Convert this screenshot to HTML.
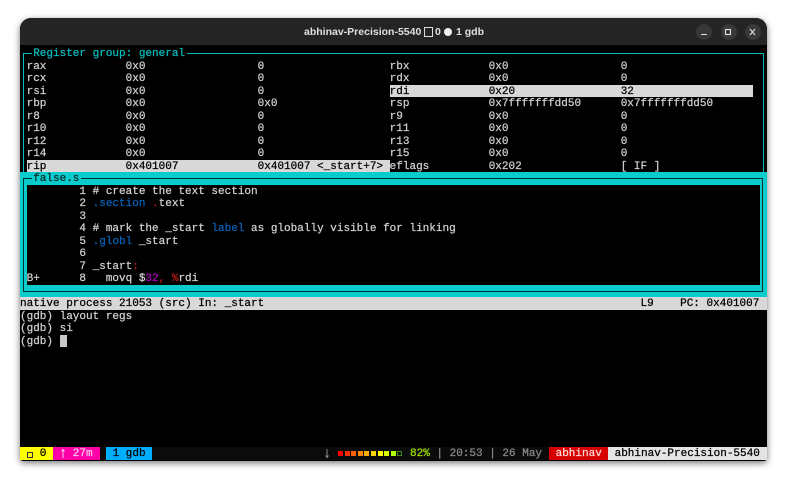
<!DOCTYPE html>
<html><head><meta charset="utf-8"><style>
html,body{margin:0;padding:0;background:#fff;width:786px;height:483px;overflow:hidden}
#w{position:absolute;left:20px;top:18px;width:747px;height:443px;background:#000;border-radius:11px 11px 3px 3px;box-shadow:0 2px 7px rgba(0,0,0,.55);overflow:hidden}
#t{position:absolute;left:284px;top:0;height:27px;color:#e0e0e0;font:bold 10.5px/28px "Liberation Sans",sans-serif;white-space:pre}
#tb{position:absolute;left:0;top:0;width:747px;height:27px;background:#242424}
.b{position:absolute;top:6px;width:16px;height:16px;border-radius:50%;background:#383838}
#s{position:absolute;left:20px;top:48.2px;font:11px/12.5px "Liberation Mono",monospace;color:#d0d0d0;width:747px;-webkit-text-stroke:.25px currentColor}
.r{height:12.5px;white-space:pre;position:relative}
.bl{color:#0a62b8}.rd{color:#c01818}.mg{color:#b000c0}
.abs{position:absolute}
.st{position:absolute;top:447px;height:12.5px;font:11px/14px "Liberation Mono",monospace;white-space:pre;-webkit-text-stroke:.25px currentColor}
.sq{position:absolute;top:450.5px;width:5px;height:5px}
.ho{width:3px;height:3px;border:1px solid #3c8a18}
</style></head><body>
<div id="w">
<div id="tb"></div>
<div id="t">abhinav-Precision-5540</div>
<div class="abs" style="left:404px;top:9px;width:7px;height:8px;border:1px solid #ddd"></div>
<div class="abs" style="left:415px;top:0;font:bold 10.5px/28px 'Liberation Sans',sans-serif;color:#e0e0e0">0</div>
<div class="abs" style="left:424px;top:10px;width:8px;height:8px;border-radius:50%;background:#eee"></div>
<div class="abs" style="left:436px;top:0;font:bold 10.5px/28px 'Liberation Sans',sans-serif;color:#e0e0e0;white-space:pre">1 gdb</div>
<div class="b" style="left:676px"></div><div class="b" style="left:701px"></div><div class="b" style="left:725px"></div>
<svg style="position:absolute;left:676px;top:6px" width="70" height="16" fill="none" stroke="#e0e0e0" stroke-width="1.1">
<path d="M5 10.5h6"/><rect x="29.5" y="5.5" width="5" height="5"/><path d="M54 5l5 6M59 5l-5 6"/></svg>
</div>

<div class="abs" style="left:23px;top:53px;width:739px;height:119px;border:1px solid #00bcbc;border-bottom:0"></div>
<div class="abs" style="left:20px;top:172px;width:747px;height:125px;background:#0acccc"></div>
<div class="abs" style="left:23px;top:178px;width:738px;height:112px;border:1.5px solid #04302f;background:#0acccc"></div>
<div class="abs" style="left:27px;top:184.5px;width:733px;height:100px;background:#000"></div>
<div class="abs" style="left:20px;top:297px;width:747px;height:12.5px;background:#d8d8d8"></div>
<div class="abs" style="left:20px;top:447px;width:747px;height:12.5px;background:#0b0b0b"></div>
<div class="abs" style="left:27px;top:159.5px;width:363px;height:12.5px;background:#d8d8d8"></div>
<div class="abs" style="left:390px;top:84.5px;width:363px;height:12.5px;background:#d8d8d8"></div>
<div class="abs" style="left:60px;top:334.5px;width:6.6px;height:12.5px;background:#c8c8c8"></div>

<div id="s">
<div class="r">  <span style="color:#00bcbc;background:#000;margin-left:-1.5px;padding:0 1.5px;position:relative;top:0">Register group: general</span></div>
<div class="r"> rax            0x0                 0                   rbx            0x0                 0</div>
<div class="r"> rcx            0x0                 0                   rdx            0x0                 0</div>
<div class="r"> rsi            0x0                 0                   <span style="color:#000">rdi            0x20                32</span></div>
<div class="r"> rbp            0x0                 0x0                 rsp            0x7fffffffdd50      0x7fffffffdd50</div>
<div class="r"> r8             0x0                 0                   r9             0x0                 0</div>
<div class="r"> r10            0x0                 0                   r11            0x0                 0</div>
<div class="r"> r12            0x0                 0                   r13            0x0                 0</div>
<div class="r"> r14            0x0                 0                   r15            0x0                 0</div>
<div class="r"> <span style="color:#000">rip            0x401007            0x401007 &lt;_start+7&gt;</span> eflags         0x202               [ IF ]</div>
<div class="r">  <span style="color:#062a2a;background:#0acccc;margin-left:-1.5px;padding:0 1.5px">false.s</span></div>
<div class="r">         1 # create the text section</div>
<div class="r">         2 <span class="bl">.section</span> <span class="rd">.</span>text</div>
<div class="r">         3</div>
<div class="r">         4 # mark the _start <span class="bl">label</span> as globally visible for linking</div>
<div class="r">         5 <span class="bl">.globl</span> _start</div>
<div class="r">         6</div>
<div class="r">         7 _start<span class="rd">:</span></div>
<div class="r"> B+      8   movq $<span class="mg">32</span><span class="rd">,</span> <span class="rd">%</span>rdi</div>
<div class="r"> </div>
<div class="r" style="color:#000">native process 21053 (src) In: _start                                                         L9    PC: 0x401007</div>
<div class="r">(gdb) layout regs</div>
<div class="r">(gdb) si</div>
<div class="r">(gdb) </div>
</div>

<div class="st" style="left:20px;width:33px;background:#ff0;color:#000">   0</div>
<div class="abs" style="left:27px;top:451.5px;width:4px;height:4px;border:1px solid #333"></div>
<div class="st" style="left:53px;width:46.5px;background:#ff00a8;color:#f8c8e8">   27m</div>
<svg class="abs" style="left:60px;top:448px" width="6" height="11" fill="none" stroke="#f8c8e8" stroke-width="1"><path d="M3 10V1.5M1.5 3.5L3 1.5L4.5 3.5"/></svg>
<div class="st" style="left:106px;width:46.2px;background:#00aeff;color:#000"> 1 gdb</div>
<svg class="abs" style="left:324px;top:448px" width="6" height="11" fill="none" stroke="#888" stroke-width="1"><path d="M3 1v8.5M1.5 7.5L3 9.5L4.5 7.5"/></svg>
<div class="st" style="left:410px;color:#a0e000">82%</div>
<div class="st" style="left:429.8px;color:#8a8a8a"> | 20:53 | 26 May</div>
<div class="st" style="left:549px;width:59.4px;background:#d70000;color:#ffd8d8"> abhinav</div>
<div class="st" style="left:608px;width:159px;background:#e4e4e4;color:#000"> abhinav-Precision-5540</div>

<div class="sq" style="left:338px;background:#f00"></div>
<div class="sq" style="left:344.6px;background:#ff3000"></div>
<div class="sq" style="left:351.2px;background:#ff5f00"></div>
<div class="sq" style="left:357.8px;background:#ff8700"></div>
<div class="sq" style="left:364.4px;background:#ffaf00"></div>
<div class="sq" style="left:371px;background:#ffd700"></div>
<div class="sq" style="left:377.6px;background:#ffff00"></div>
<div class="sq" style="left:384.2px;background:#d7ff00"></div>
<div class="sq" style="left:390.8px;background:#afff00"></div>
<div class="sq ho" style="left:397.4px"></div>
</body></html>
